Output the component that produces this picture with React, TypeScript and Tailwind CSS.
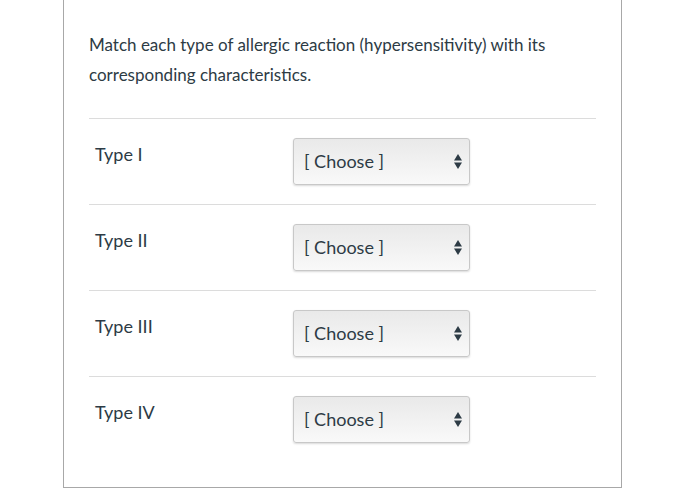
import React from 'react'

const types = ['Type I', 'Type II', 'Type III', 'Type IV']

const SortArrows = () => (
  <svg width="8" height="17" viewBox="0 0 8 17" className="shrink-0">
    <path d="M4 1 L8 7.5 L0 7.5 Z" fill="#2d3b45" />
    <path d="M4 16 L8 9.5 L0 9.5 Z" fill="#2d3b45" />
  </svg>
)

const ChooseBox = () => (
  <div className="flex items-center justify-between w-[177px] h-[47px] pl-[10px] pr-[7px] rounded-[3px] border border-[#c8c8c8] bg-gradient-to-b from-[#e9e9e9] to-[#f9f9f9] shadow-[0_1px_2px_rgba(0,0,0,0.15)]">
    <span className="text-[18px] text-[#2d3b45]">[ Choose ]</span>
    <SortArrows />
  </div>
)

export default function App() {
  return (
    <div
      className="w-[673px] h-[489px] bg-white overflow-hidden"
      style={{ fontFamily: 'Lato, "Liberation Sans", sans-serif' }}
    >
      <div className="ml-[63px] w-[559px] h-[488px] border-l border-r border-b border-[#a8a8a8] px-[25px] pt-[30px]">
        {/* Question */}
        <p className="text-[17px] leading-[30px] text-[#2d3b45]">
          Match each type of allergic reaction (hypersensitivity) with its corresponding characteristics.
        </p>

        {/* Answer rows */}
        <div className="mt-[28px]">
          {types.map((t) => (
            <div key={t} className="flex border-t border-[#dcdcdc] h-[86px]">
              <div className="w-[204px] pl-[6px] pt-[23px] text-[18px] leading-[24px] text-[#2d3b45]">{t}</div>
              <div className="pt-[19px]">
                <ChooseBox />
              </div>
            </div>
          ))}
        </div>
      </div>
    </div>
  )
}
